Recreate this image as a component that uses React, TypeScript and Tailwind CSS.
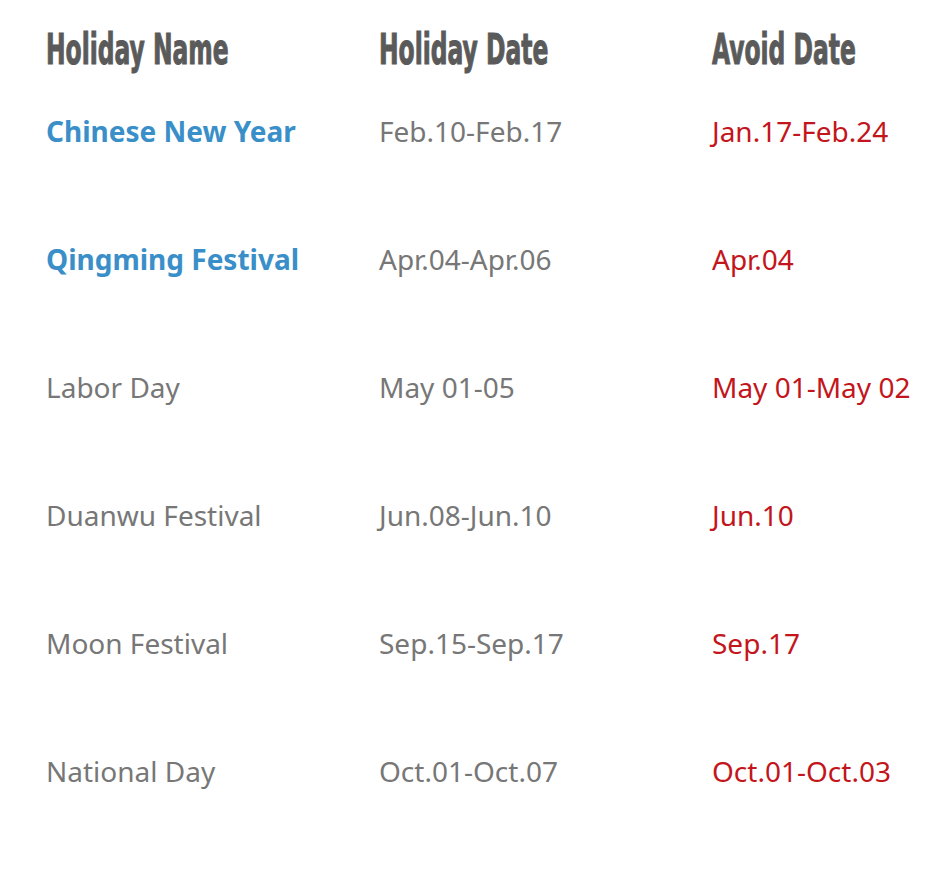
const rows: { name: string; date: string; avoid: string; link?: boolean }[] = [
  { name: "Chinese New Year", date: "Feb.10-Feb.17", avoid: "Jan.17-Feb.24", link: true },
  { name: "Qingming Festival", date: "Apr.04-Apr.06", avoid: "Apr.04", link: true },
  { name: "Labor Day", date: "May 01-05", avoid: "May 01-May 02" },
  { name: "Duanwu Festival", date: "Jun.08-Jun.10", avoid: "Jun.10" },
  { name: "Moon Festival", date: "Sep.15-Sep.17", avoid: "Sep.17" },
  { name: "National Day", date: "Oct.01-Oct.07", avoid: "Oct.01-Oct.03" },
];

function Head({ children }: { children: string }) {
  return (
    <div className="h-[67px] flex items-start pt-[29px]">
      <span className="inline-block origin-left scale-x-[0.62] whitespace-nowrap font-['DejaVu_Sans_Condensed',sans-serif] font-bold text-[42px] leading-none text-[#5a5a5a] [-webkit-text-stroke:1px_#5a5a5a]">
        {children}
      </span>
    </div>
  );
}

export default function App() {
  return (
    <div className="w-[939px] h-[869px] bg-white pl-[46px] font-['Noto_Sans',sans-serif]">
      <div className="grid grid-cols-[333px_333px_1fr]">
        <Head>Holiday Name</Head>
        <Head>Holiday Date</Head>
        <Head>Avoid Date</Head>
        {rows.map((r) => (
          <div key={r.name} className="contents">
            <div className="h-[128px] flex items-center">
              <span className={r.link ? "text-[28px] font-bold text-[#3a8fc9]" : "text-[28px] text-[#777777]"}>{r.name}</span>
            </div>
            <div className="h-[128px] flex items-center">
              <span className="text-[28px] text-[#777777]">{r.date}</span>
            </div>
            <div className="h-[128px] flex items-center">
              <span className="text-[28px] text-[#c3161c]">{r.avoid}</span>
            </div>
          </div>
        ))}
      </div>
    </div>
  );
}
